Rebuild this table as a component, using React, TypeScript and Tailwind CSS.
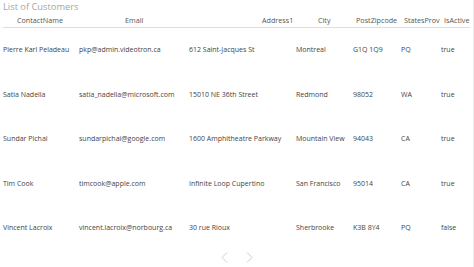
import React from "react";

type Customer = {
  name: string;
  email: string;
  address: string;
  city: string;
  zip: string;
  state: string;
  active: string;
};

const customers: Customer[] = [
  { name: "Pierre Karl Peladeau", email: "pkp@admin.videotron.ca", address: "612 Saint-Jacques St", city: "Montreal", zip: "G1Q 1Q9", state: "PQ", active: "true" },
  { name: "Satia Nadella", email: "satia_nadella@microsoft.com", address: "15010 NE 36th Street", city: "Redmond", zip: "98052", state: "WA", active: "true" },
  { name: "Sundar Pichai", email: "sundarpichai@google.com", address: "1600 Amphitheatre Parkway", city: "Mountain View", zip: "94043", state: "CA", active: "true" },
  { name: "Tim Cook", email: "timcook@apple.com", address: "Infinite Loop Cupertino", city: "San Francisco", zip: "95014", state: "CA", active: "true" },
  { name: "Vincent Lacroix", email: "vincent.lacroix@norbourg.ca", address: "30 rue Rioux", city: "Sherbrooke", zip: "K3B 8Y4", state: "PQ", active: "false" },
];

const cols = "grid grid-cols-[76px_110px_107px_57px_48px_40px_36px]";

export default function App() {
  return (
    <div className="w-[474px] h-[267px] bg-white overflow-hidden border-r border-[#ececec] font-['Open_Sans','Noto_Sans',sans-serif]">
      {/* Title */}
      <div className="h-[14px] pl-[3px] text-[9.3px] leading-[14px] text-[#a6a6a6]">
        List of Customers
      </div>

      {/* Header */}
      <div className="mx-[3px] border-b border-[#dedede]">
        <div className="grid grid-cols-[73px_110px_107px_57px_48px_40px_33px] h-[13px] text-[7.2px] leading-[12px] text-[#555] whitespace-nowrap">
          <div className="pl-[14px]">ContactName</div>
          <div className="pl-[49px]">Email</div>
          <div className="pl-[76px]">Address1</div>
          <div className="pl-[25px]">City</div>
          <div className="pl-[6px]">PostZipcode</div>
          <div className="pl-[6px]">StatesProv</div>
          <div className="pl-[6px]">IsActive</div>
        </div>
      </div>

      {/* Rows */}
      {customers.map((c) => (
        <div key={c.email} className={`${cols} h-[44.5px] items-center text-[7px] text-[#444] whitespace-nowrap`}>
          <div className="pl-[3px]">{c.name}</div>
          <div className="pl-[3px]">{c.email}</div>
          <div className="pl-[3px]">{c.address}</div>
          <div className="pl-[3px]">{c.city}</div>
          <div className="pl-[3px]">{c.zip}</div>
          <div className="pl-[3px]">{c.state}</div>
          <div className="pl-[3px]">{c.active}</div>
        </div>
      ))}

      {/* Pager */}
      <div className="flex justify-center items-center gap-[18px] h-[14px] pl-[1px]">
        <svg width="7" height="11" viewBox="0 0 7 11" fill="none" stroke="#cdcdcd" strokeWidth="1">
          <path d="M6 0.5 L1 5.5 L6 10.5" />
        </svg>
        <svg width="7" height="11" viewBox="0 0 7 11" fill="none" stroke="#cdcdcd" strokeWidth="1">
          <path d="M1 0.5 L6 5.5 L1 10.5" />
        </svg>
      </div>
    </div>
  );
}
